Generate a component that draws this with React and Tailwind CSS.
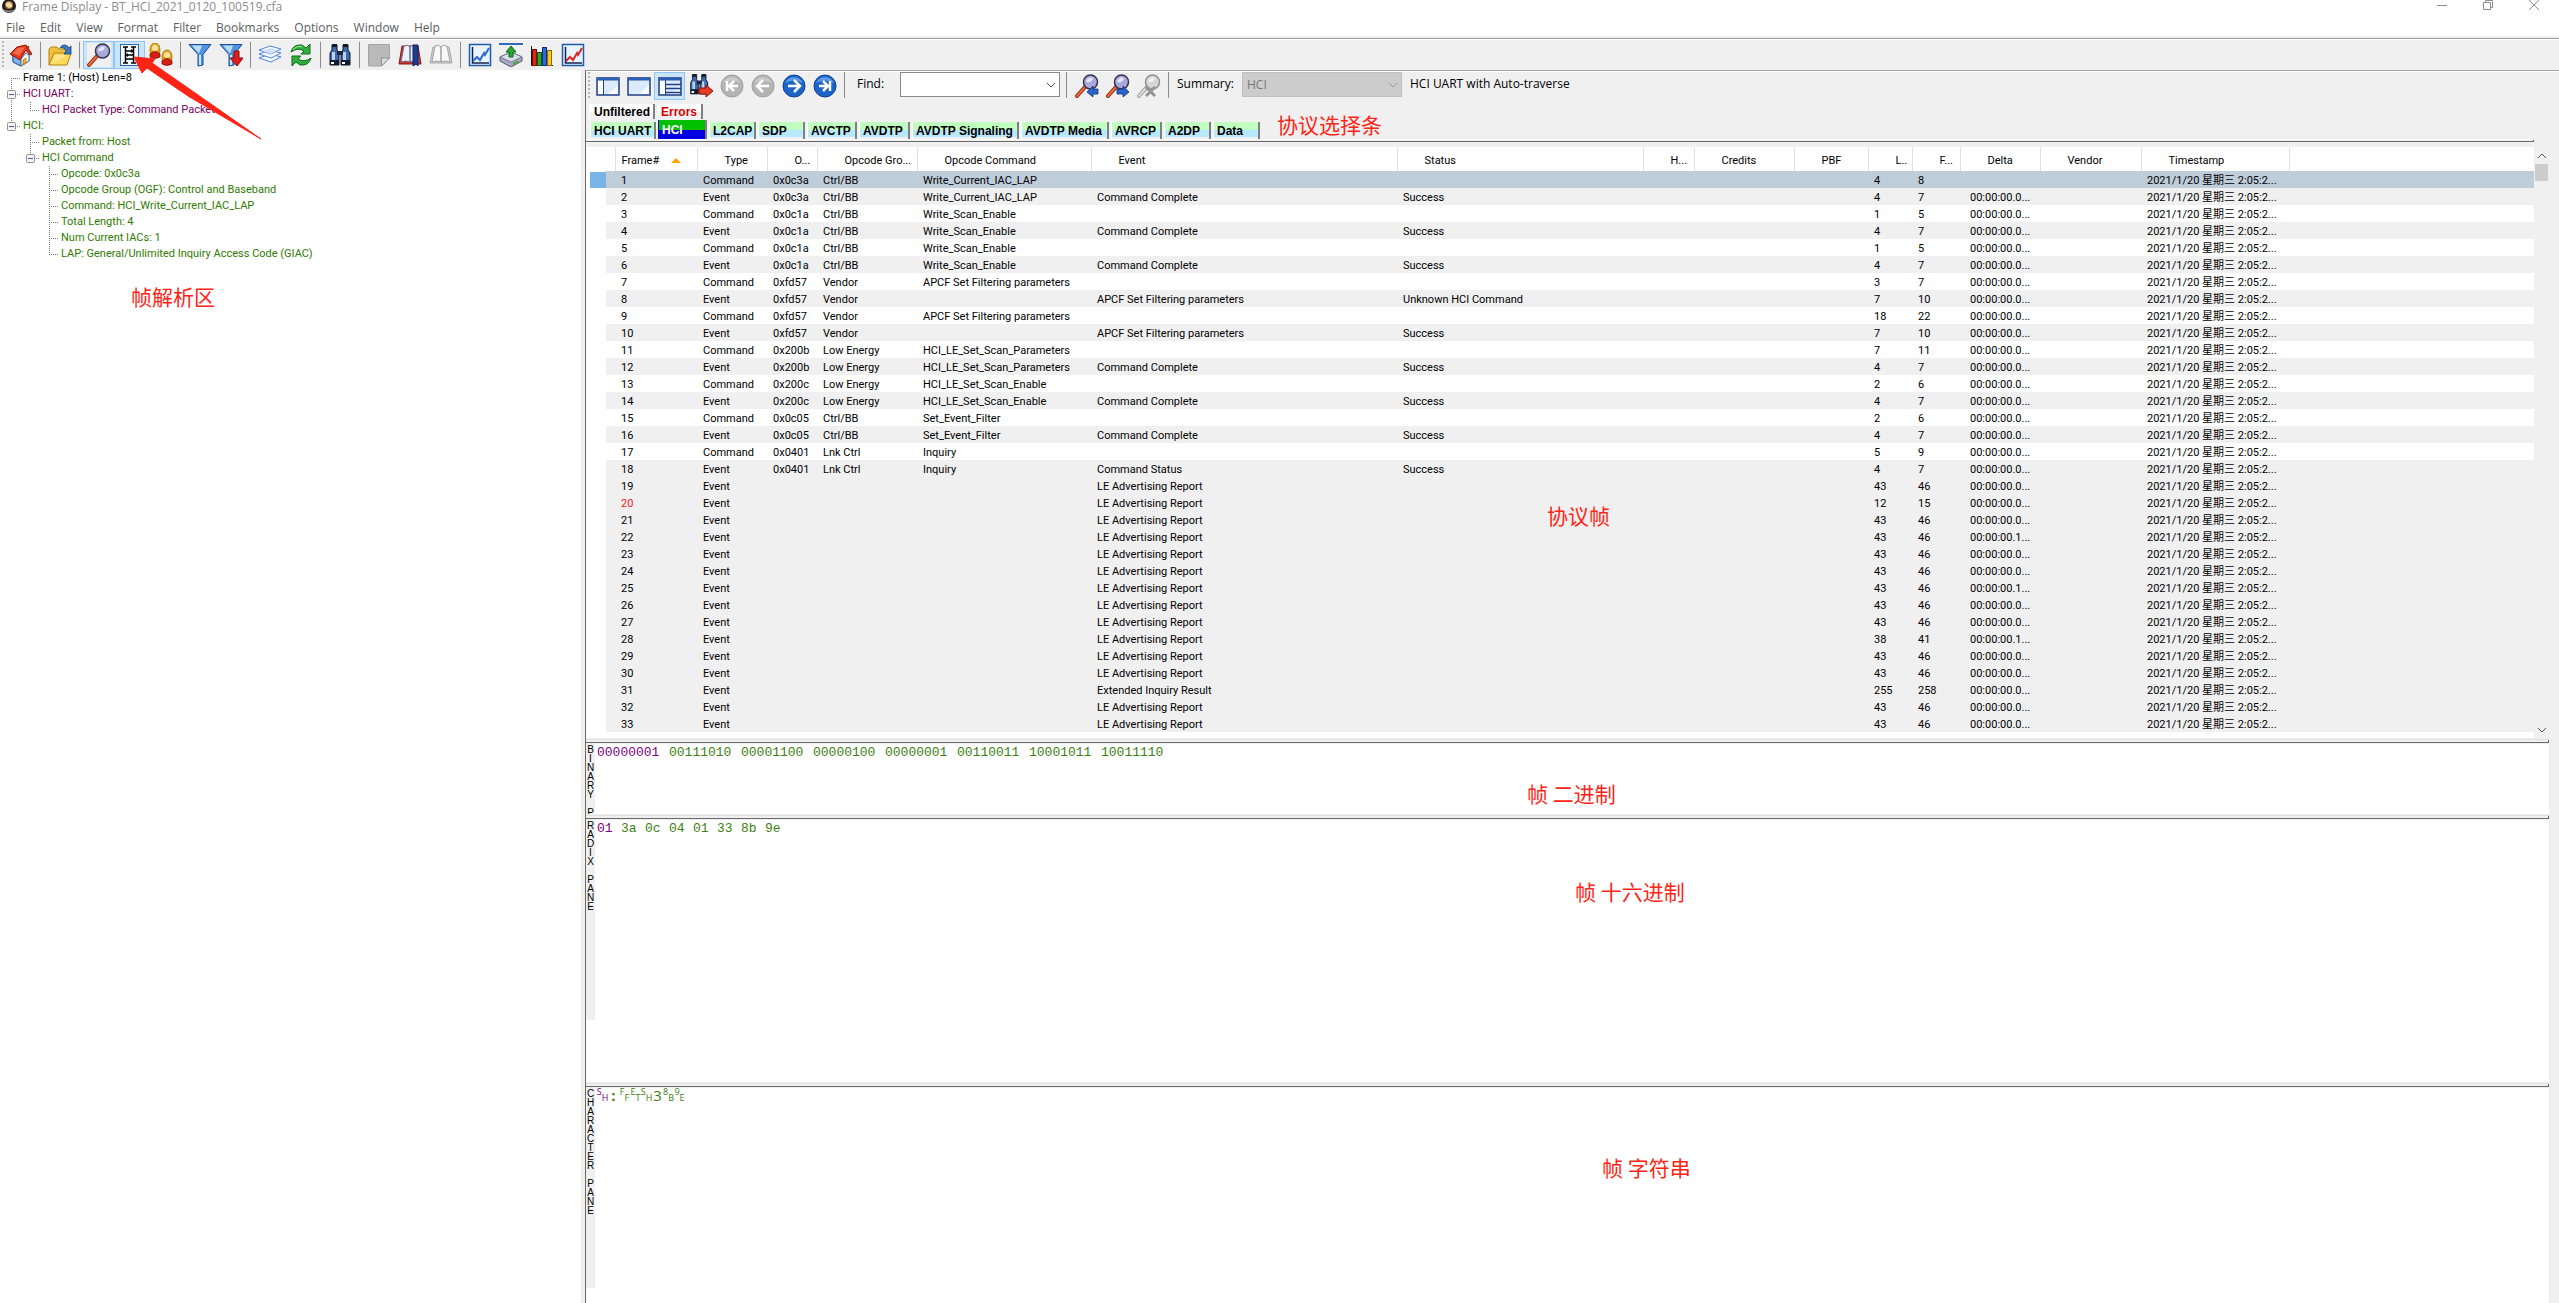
import React from 'react';

const menuItems = ['File', 'Edit', 'View', 'Format', 'Filter', 'Bookmarks', 'Options', 'Window', 'Help'];

/* ---------- Icons ---------- */

const Icon = ({ children }) => (
  <svg viewBox="0 0 24 24" className="w-6 h-6 shrink-0" aria-hidden="true">
    {children}
  </svg>
);

const AppLogo = () => (
  <svg viewBox="0 0 16 16" className="w-4 h-4 shrink-0" aria-hidden="true">
    <circle cx="8" cy="7" r="7" fill="#1d1d1d" />
    <path d="M2 10a7 7 0 0 0 12 0q-6 3-12 0z" fill="#8a8a8a" />
    <circle cx="8" cy="6" r="4" fill="#a8743a" />
    <path d="M5 4l3-1 3 2v3l-3 1-3-2z" fill="#f3d9a6" />
  </svg>
);

const HomeIcon = () => (
  <Icon>
    <path d="M4 11v8l8 4 8-5v-8l-5-4z" fill="#dce9f8" stroke="#3c68a8" />
    <path d="M4 12l8 4v7l-8-4z" fill="#7fb2ea" stroke="#2c5a9c" />
    <path d="M12 16l5-6 3 2v6l-8 5z" fill="#fff" stroke="#4b6ea0" />
    <path d="M14 22v-5l3-2v5z" fill="#f3b43a" stroke="#a56a10" strokeWidth=".8" />
    <path d="M1 11l7-7 9-2 6 9-2 1-4-5-6 10z" fill="#e2371c" stroke="#8e1b0c" />
    <path d="M4 10l5-5 7-1-6 9z" fill="#f56a4a" />
    <path d="M17 3h3v5l-3-4z" fill="#c32812" />
  </Icon>
);

const FolderIcon = () => (
  <Icon>
    <path d="M1 22V6l2-2h6l2 2h7v4" fill="#f0c23c" stroke="#b68412" />
    <path d="M1 22l5-12h17l-4 12z" fill="#fbd95c" stroke="#b68412" />
    <path d="M3 21l4-9h13z" fill="#fff0a2" opacity=".6" />
    <path d="M12 5c2-4 7-4 9 0l2-2v8h-7l2-3c-1-3-4-4-6-3z" fill="#3c78c0" stroke="#173f7c" strokeWidth=".8" />
  </Icon>
);

const Lens = ({ gray }) => (
  <>
    <path d="M2 22l8-9" stroke={gray ? '#9a9a9a' : '#8c2a10'} strokeWidth="4" strokeLinecap="round" />
    <path d="M2 22l8-9" stroke={gray ? '#dcdcdc' : '#f0683c'} strokeWidth="2" strokeLinecap="round" />
    <circle cx="15.500" cy="8" r="7" fill={gray ? '#d6d6d6' : '#a9a9dc'} stroke={gray ? '#8f8f8f' : '#34344c'} strokeWidth="1.500" />
    <path d="M11 8a5 5 0 0 1 7-4q-1 5-7 4z" fill={gray ? '#f2f2f2' : '#e6e6fa'} />
  </>
);

const MagnifierIcon = () => (
  <Icon>
    <rect width="24" height="24" fill="#f0f0f0" />
    <Lens />
  </Icon>
);

const DecodePaneIcon = () => (
  <Icon>
    <rect x="2.500" y="1.500" width="18" height="21" fill="#f4faff" stroke="#2c68b8" />
    <path d="M5 4h5M5 20h5M7.500 4v16M13 4h5M13 20h5M15.500 4v16M8 8h7M8 12h7M8 16h7" stroke="#000" strokeWidth="1.500" />
    <path d="M13 6l3 2-3 2zM10 10l-3 2 3 2z" fill="#000" />
  </Icon>
);

const Person = ({ x, y }) => (
  <g transform={`translate(${x} ${y})`}>
    <path d="M1 8q0-8 5-8t5 8l-1 5H2z" fill="#e4a91c" stroke="#9a6c08" strokeWidth=".8" />
    <circle cx="6" cy="5" r="3" fill="#ffe0a0" />
    <path d="M1 11q5-5 10 0v3q-5 3-10 0z" fill="#d42014" stroke="#8c0e08" strokeWidth=".8" />
  </g>
);

const PeopleIcon = () => (
  <Icon>
    <Person x={0} y={0} />
    <Person x={12} y={7} />
  </Icon>
);

const Funnel = () => (
  <>
    <path d="M1 1.500h22l-8 10V22l-5 1V11.500z" fill="#4f94de" stroke="#1a4f96" />
    <path d="M4 2.500h10l-3 8z" fill="#b9dcfa" />
    <path d="M12 12v10" stroke="#cfe8ff" strokeWidth="2" />
  </>
);

const FunnelIcon = () => (
  <Icon>
    <Funnel />
  </Icon>
);

const FunnelArrowIcon = () => (
  <Icon>
    <Funnel />
    <path d="M15 8h5v7h4l-6 8-7-8h4z" fill="#e01c1c" stroke="#8c0a0a" />
  </Icon>
);

const LayersIcon = () => (
  <Icon>
    {[12, 8, 4].map((y) => (
      <path key={y} d={`M1 ${y + 3}l12 4 10-5-11-3z`} fill="#f4f9ff" stroke="#5384dc" />
    ))}
    <path d="M4 8l9 3 7-4-8-2z" fill="#cfe2fc" />
  </Icon>
);

const RefreshIcon = () => (
  <Icon>
    <path d="M2 9q2-8 11-7l4 3 4-4v10H12l3-3q-6-4-13 1z" fill="#2fae3c" stroke="#126a1c" />
    <path d="M22 15q-2 8-11 7l-4-3-4 4V13h9l-3 3q6 4 13-1z" fill="#2fae3c" stroke="#126a1c" />
    <path d="M4 7q4-5 9-3" stroke="#a6ef9c" fill="none" />
  </Icon>
);

const Binoculars = () => (
  <>
    <path d="M4 2h5v5l2 3v12H2V10l2-3zM15 2h5v5l2 3v12h-9V10l2-3z" fill="#3f69a8" stroke="#0c1830" />
    <path d="M4 9h3v8H4zM15 9h3v8h-3z" fill="#b7d3f2" />
    <path d="M2 17h9v5H2zM13 17h9v5h-9zM4 1h5v3H4zM15 1h5v3h-5z" fill="#111a2c" />
    <path d="M3 19h3v2H3zM14 19h3v2h-3z" fill="#fff" />
    <path d="M9 8h6v4H9z" fill="#1b2740" />
  </>
);

const BinocularsIcon = () => (
  <Icon>
    <Binoculars />
  </Icon>
);

const NoteIcon = () => (
  <Icon>
    <path d="M1.500 1.500h21V15l-8 8h-13z" fill="#b9b9b9" stroke="#a3a3a3" />
    <path d="M22.500 15h-8v8z" fill="#dedede" stroke="#8f8f8f" />
  </Icon>
);

const BookIcon = () => (
  <Icon>
    <path d="M4 3h16l3 18H1z" fill="#c8342c" stroke="#8c1a14" />
    <path d="M6 3q4-2 6 1v15q-4-2-9 0zM18 3q-4-2-6 1v15q4-2 9 0z" fill="#eef0fb" stroke="#6c6c96" />
    <path d="M15 2h5v21l-2-2-3 2z" fill="#1c3f94" stroke="#0c1f5c" />
  </Icon>
);

const OpenBookIcon = () => (
  <Icon>
    <path d="M4 4h16l3 16H1z" fill="#d4d4d4" stroke="#a8a8a8" />
    <path d="M6 3q4-2 6 1v15q-4-2-9 0zM18 3q-4-2-6 1v15q4-2 9 0z" fill="#f8f8f8" stroke="#a2a2a2" />
  </Icon>
);

const ChartIcon = ({ color }) => (
  <Icon>
    <rect x="1.500" y="1.500" width="21" height="21" fill="#eaf4ff" stroke="#1c5cac" strokeWidth="1.500" />
    <path d="M4.500 4v16H21" stroke="#10204c" strokeWidth="1.500" fill="none" />
    <path d="M5 18l4-4 3 3 4-7 1 2 4-7" stroke={color} strokeWidth="2" fill="none" />
  </Icon>
);

const DriveIcon = () => (
  <Icon>
    <path d="M0 1h24" stroke="#2f68bc" strokeWidth="2" />
    <path d="M1 14l11-5 11 5v4l-11 6-11-6z" fill="#a8a8c4" stroke="#56566e" />
    <path d="M1 14l11-5 11 5-11 5z" fill="#dcdcea" stroke="#7c7c94" />
    <path d="M14 20l5-3v2l-5 3z" fill="#35b52c" />
    <path d="M10 14V9H7l5-6 5 6h-3v5z" fill="#27a832" stroke="#0f6a18" />
  </Icon>
);

const BarsIcon = () => (
  <Icon>
    <path d="M1.500 3v19.500H23" stroke="#111" fill="none" />
    <rect x="2.500" y="6.500" width="4" height="16" fill="#e02418" stroke="#7c0c08" />
    <rect x="7.500" y="9.500" width="4" height="13" fill="#27a62e" stroke="#0d5c14" />
    <rect x="12.500" y="4.500" width="4" height="18" fill="#2c6ad4" stroke="#0f2f80" />
    <rect x="17.500" y="7.500" width="4" height="15" fill="#f8c81c" stroke="#8c6c04" />
  </Icon>
);

const WindowIcon = ({ variant }) => (
  <Icon>
    <rect x="1" y="4" width="22" height="17" fill="#dbeafc" stroke="#1f3f86" strokeWidth="1.500" />
    <path d="M12 20l10-9v9z" fill="#f6faff" />
    <path d="M1 5h22" stroke="#2f5fb4" strokeWidth="3" />
    {variant !== 'plain' && <path d="M2 7h5v13H2z" fill="#fff" />}
    {variant !== 'plain' && <path d="M7.500 6v15" stroke="#1f3f86" />}
    {variant === 'split' && (
      <path d="M7 10.500h16M7 14.500h16M7 18.500h16" stroke="#1f3f86" strokeWidth="1.500" />
    )}
  </Icon>
);

const BinocularsArrowIcon = () => (
  <Icon>
    <g transform="translate(0 -1) scale(.85 .95)">
      <Binoculars />
    </g>
    <path d="M10 14h7v-3l7 6-7 6v-3h-7z" fill="#e63a24" stroke="#8e1408" />
  </Icon>
);

const arrowPaths = {
  first: 'M7 7v10M18 12h-8M14 7l-5 5 5 5',
  prev: 'M18 12H7M12 6l-6 6 6 6',
  next: 'M6 12h11M12 6l6 6-6 6',
  last: 'M6 12h8M10 7l5 5-5 5M17 7v10',
};

const NavIcon = ({ kind, gray }) => (
  <Icon>
    <circle cx="12" cy="12" r="11" fill={gray ? '#b4b4b4' : '#1c64c8'} stroke={gray ? '#a0a0a0' : '#0f418e'} />
    <path d="M3 9a10 10 0 0 1 18 0q-9-5-18 0z" fill={gray ? '#cacaca' : '#5e9cea'} />
    <path d={arrowPaths[kind]} stroke="#fff" strokeWidth="2.500" fill="none" />
  </Icon>
);

const FindIcon = ({ kind }) => (
  <Icon>
    <Lens gray={kind === 'clear'} />
    {kind === 'back' && <path d="M23 15v5h-5v3l-6-5 6-6v3z" fill="#2b62cc" stroke="#10327e" strokeWidth=".8" />}
    {kind === 'next' && <path d="M11 15v5h6v3l6-5-6-6v3z" fill="#2b62cc" stroke="#10327e" strokeWidth=".8" />}
    {kind === 'clear' && <path d="M9 13l9 9M18 13l-9 9" stroke="#949494" strokeWidth="3" />}
  </Icon>
);

/* ---------- Toolbar pieces ---------- */

const ToolButton = ({ label, active, children }) => (
  <button
    type="button"
    aria-label={label}
    className={`w-[31px] h-7 flex items-center justify-center shrink-0 border ${
      active ? 'bg-[#cce4f7] border-[#8fc7f5]' : 'border-transparent'
    }`}
  >
    {children}
  </button>
);

const Separator = () => (
  <div className="w-2 flex justify-center shrink-0">
    <div className="w-px h-[26px] bg-[#8c8c8c]" />
  </div>
);

const Grip = () => (
  <div className="w-0.5 h-7 shrink-0 bg-[repeating-linear-gradient(#b8b8b8_0px,#b8b8b8_2px,transparent_2px,transparent_4px)]" />
);

const Chevron = ({ className }) => (
  <svg viewBox="0 0 10 6" className={`w-2.5 h-1.5 ${className}`} fill="none" aria-hidden="true">
    <path d="M1 1l4 4 4-4" stroke="currentColor" />
  </svg>
);

/* ---------- Decode tree ---------- */

const treeRows = [
  { guides: ['start'], text: 'Frame 1: (Host) Len=8', color: 'text-black' },
  { guides: ['boxMid'], text: 'HCI UART:', color: 'text-[#780060]' },
  { guides: ['line', 'end'], text: 'HCI Packet Type: Command Packet', color: 'text-[#780060]' },
  { guides: ['boxEnd'], text: 'HCI:', color: 'text-[#2f7a00]' },
  { guides: ['blank', 'tee'], text: 'Packet from: Host', color: 'text-[#2f7a00]' },
  { guides: ['blank', 'boxEnd'], text: 'HCI Command', color: 'text-[#2f7a00]' },
  { guides: ['blank', 'blank', 'tee'], text: 'Opcode: 0x0c3a', color: 'text-[#2f7a00]' },
  { guides: ['blank', 'blank', 'tee'], text: 'Opcode Group (OGF): Control and Baseband', color: 'text-[#2f7a00]' },
  { guides: ['blank', 'blank', 'tee'], text: 'Command: HCI_Write_Current_IAC_LAP', color: 'text-[#2f7a00]' },
  { guides: ['blank', 'blank', 'tee'], text: 'Total Length: 4', color: 'text-[#2f7a00]' },
  { guides: ['blank', 'blank', 'tee'], text: 'Num Current IACs: 1', color: 'text-[#2f7a00]' },
  { guides: ['blank', 'blank', 'end'], text: 'LAP: General/Unlimited Inquiry Access Code (GIAC)', color: 'text-[#2f7a00]' },
];

const guidePaths = {
  blank: '',
  line: 'M9.500 0v16',
  start: 'M9.500 8v8M9 8.500h9',
  tee: 'M9.500 0v16M9 8.500h9',
  end: 'M9.500 0v8M9 8.500h9',
  boxMid: 'M9.500 0v16M9 8.500h9',
  boxEnd: 'M9.500 0v8M9 8.500h9',
};

const Guide = ({ kind }) => (
  <svg viewBox="0 0 19 16" className="w-[19px] h-4 shrink-0" fill="none" aria-hidden="true">
    <path d={guidePaths[kind]} stroke="#808080" strokeDasharray="1 1" />
    {kind.startsWith('box') && (
      <>
        <rect x="5.500" y="4.500" width="8" height="8" rx="1" fill="#f4f4f4" stroke="#919191" />
        <path d="M7 8.500h5" stroke="#3d5fa8" />
      </>
    )}
  </svg>
);

const DecodeTree = () => (
  <aside className="w-[581px] shrink-0 bg-white pl-0.5">
    <ul className="font-['Roboto',sans-serif] text-[11px] leading-4">
      {treeRows.map((row) => (
        <li key={row.text} className={`flex h-4 whitespace-nowrap ${row.color}`}>
          {row.guides.map((kind, i) => (
            <Guide key={i} kind={kind} />
          ))}
          <span className="pl-0.5">{row.text}</span>
        </li>
      ))}
    </ul>
  </aside>
);

/* ---------- Frame table ---------- */

const protocolTabs = [
  { name: 'HCI UART', width: 'w-[66px]' },
  { name: 'HCI', width: 'w-[49px]', active: true },
  { name: 'L2CAP', width: 'w-[47px]' },
  { name: 'SDP', width: 'w-[47px]' },
  { name: 'AVCTP', width: 'w-[50px]' },
  { name: 'AVDTP', width: 'w-[51px]' },
  { name: 'AVDTP Signaling', width: 'w-[107px]' },
  { name: 'AVDTP Media', width: 'w-[88px]' },
  { name: 'AVRCP', width: 'w-[51px]' },
  { name: 'A2DP', width: 'w-[47px]' },
  { name: 'Data', width: 'w-[47px]' },
];

const columns = [
  { name: 'Type', width: 'w-[70px]' },
  { name: 'O...', width: 'w-[50px]' },
  { name: 'Opcode Gro...', width: 'w-[100px]' },
  { name: 'Opcode Command', width: 'w-[174px]' },
  { name: 'Event', width: 'w-[306px]' },
  { name: 'Status', width: 'w-[246px]' },
  { name: 'H...', width: 'w-[51px]' },
  { name: 'Credits', width: 'w-[100px]' },
  { name: 'PBF', width: 'w-[74px]' },
  { name: 'L..', width: 'w-[44px]' },
  { name: 'F...', width: 'w-[48px]' },
  { name: 'Delta', width: 'w-[80px]' },
  { name: 'Vendor', width: 'w-[101px]' },
  { name: 'Timestamp', width: 'w-[148px]' },
];

const commandFrames = [
  ['Command', '0x0c3a', 'Ctrl/BB', 'Write_Current_IAC_LAP', '', '', 4, 8],
  ['Event', '0x0c3a', 'Ctrl/BB', 'Write_Current_IAC_LAP', 'Command Complete', 'Success', 4, 7],
  ['Command', '0x0c1a', 'Ctrl/BB', 'Write_Scan_Enable', '', '', 1, 5],
  ['Event', '0x0c1a', 'Ctrl/BB', 'Write_Scan_Enable', 'Command Complete', 'Success', 4, 7],
  ['Command', '0x0c1a', 'Ctrl/BB', 'Write_Scan_Enable', '', '', 1, 5],
  ['Event', '0x0c1a', 'Ctrl/BB', 'Write_Scan_Enable', 'Command Complete', 'Success', 4, 7],
  ['Command', '0xfd57', 'Vendor', 'APCF Set Filtering parameters', '', '', 3, 7],
  ['Event', '0xfd57', 'Vendor', '', 'APCF Set Filtering parameters', 'Unknown HCI Command', 7, 10],
  ['Command', '0xfd57', 'Vendor', 'APCF Set Filtering parameters', '', '', 18, 22],
  ['Event', '0xfd57', 'Vendor', '', 'APCF Set Filtering parameters', 'Success', 7, 10],
  ['Command', '0x200b', 'Low Energy', 'HCI_LE_Set_Scan_Parameters', '', '', 7, 11],
  ['Event', '0x200b', 'Low Energy', 'HCI_LE_Set_Scan_Parameters', 'Command Complete', 'Success', 4, 7],
  ['Command', '0x200c', 'Low Energy', 'HCI_LE_Set_Scan_Enable', '', '', 2, 6],
  ['Event', '0x200c', 'Low Energy', 'HCI_LE_Set_Scan_Enable', 'Command Complete', 'Success', 4, 7],
  ['Command', '0x0c05', 'Ctrl/BB', 'Set_Event_Filter', '', '', 2, 6],
  ['Event', '0x0c05', 'Ctrl/BB', 'Set_Event_Filter', 'Command Complete', 'Success', 4, 7],
  ['Command', '0x0401', 'Lnk Ctrl', 'Inquiry', '', '', 5, 9],
  ['Event', '0x0401', 'Lnk Ctrl', 'Inquiry', 'Command Status', 'Success', 4, 7],
];

const report = (length = 43, frameSize = 46, event = 'LE Advertising Report') => [
  'Event', '', '', '', event, '', length, frameSize,
];

const frames = [
  ...commandFrames,
  report(),
  report(12, 15),
  report(),
  report(),
  report(),
  report(),
  report(),
  report(),
  report(),
  report(38, 41),
  report(),
  report(),
  report(255, 258, 'Extended Inquiry Result'),
  report(),
  report(),
];

const slowFrames = [22, 25, 28];
const errorFrames = [20];

const rowBackground = (frame) => {
  if (frame === 1) return 'bg-[#bfccda]';
  return frame % 2 === 0 || frame > 18 ? 'bg-[#f0f0f0]' : 'bg-white';
};

const delta = (frame) => {
  if (frame === 1) return '';
  return slowFrames.includes(frame) ? '00:00:00.1...' : '00:00:00.0...';
};

const Cell = ({ bg, children, className = 'pl-1.5' }) => (
  <td className={`p-0 pt-0.5 overflow-hidden ${bg} ${className}`}>{children}</td>
);

const FrameTable = () => (
  <table className="flex-1 min-w-0 table-fixed border-collapse font-['Roboto','Noto_Sans_CJK_SC',sans-serif] text-[11px] leading-[15px] whitespace-nowrap">
    <colgroup>
      <col className="w-5" />
      <col className="w-[9px]" />
      <col className="w-[82px]" />
      {columns.map((col) => (
        <col key={col.name} className={col.width} />
      ))}
      <col />
    </colgroup>
    <thead>
      <tr className="h-6 text-left">
        <td colSpan={2} className="p-0 border-r border-[#e2e2e2]" />
        <th scope="col" className="p-0 pt-0.5 pl-1.5 font-normal border-r border-[#e2e2e2]">
          <span className="flex items-center gap-3">
            Frame#
            <svg viewBox="0 0 10 5" className="w-2.5 h-[5px]" aria-hidden="true">
              <path d="M0 5l5-5 5 5z" fill="#ffa500" />
            </svg>
          </span>
        </th>
        {columns.map((col) => (
          <th key={col.name} scope="col" className="p-0 pt-0.5 pl-[27px] font-normal border-r border-[#e2e2e2]">
            {col.name}
          </th>
        ))}
        <td className="p-0" />
      </tr>
    </thead>
    <tbody>
      {frames.map(([type, opcode, group, command, event, status, length, size], i) => {
        const frame = i + 1;
        const bg = rowBackground(frame);
        return (
          <tr key={frame} className="h-[17px]">
            <td className="p-0 pl-1">{frame === 1 && <div className="h-4 bg-[#7ab3e6]" />}</td>
            <Cell bg={bg} className="" />
            <Cell bg={bg} className={`pl-1.5 ${errorFrames.includes(frame) ? 'text-[#f02020]' : ''}`}>{frame}</Cell>
            <Cell bg={bg}>{type}</Cell>
            <Cell bg={bg}>{opcode}</Cell>
            <Cell bg={bg}>{group}</Cell>
            <Cell bg={bg}>{command}</Cell>
            <Cell bg={bg}>{event}</Cell>
            <Cell bg={bg}>{status}</Cell>
            <Cell bg={bg} />
            <Cell bg={bg} />
            <Cell bg={bg} />
            <Cell bg={bg}>{length}</Cell>
            <Cell bg={bg}>{size}</Cell>
            <Cell bg={bg} className="pl-2.5">{delta(frame)}</Cell>
            <Cell bg={bg} />
            <Cell bg={bg}>2021/1/20 星期三 2:05:2...</Cell>
            <Cell bg={bg} />
          </tr>
        );
      })}
    </tbody>
  </table>
);

const ScrollBar = () => (
  <div className="w-[15px] shrink-0 flex flex-col items-center justify-between bg-[#f0f0f0] text-[#505050]">
    <div className="w-full flex flex-col items-center">
      <div className="h-[17px] flex items-center">
        <Chevron className="rotate-180" />
      </div>
      <div className="w-[13px] h-[17px] bg-[#cdcdcd]" />
    </div>
    <div className="h-[17px] flex items-center">
      <Chevron className="" />
    </div>
  </div>
);

/* ---------- Data panes ---------- */

const Splitter = () => (
  <div className="h-1.5 shrink-0 pt-px bg-[#f0f0f0]">
    <div className="h-px bg-[#e0e0e0]" />
    <div className="h-[3px] border-b border-r border-[#696969]" />
  </div>
);

const PaneLabel = ({ text, height = 'h-[200px]' }) => (
  <div className={`w-[9px] shrink-0 bg-[#f0f0f0] pt-px font-['Liberation_Sans',sans-serif] text-[10px] leading-[9px] text-center text-black ${height}`}>
    {text.split('').map((letter, i) => (
      <div key={i} className="h-[9px]">{letter}</div>
    ))}
  </div>
);

const binary = ['00000001', '00111010', '00001100', '00000100', '00000001', '00110011', '10001011', '10011110'];
const radix = ['01', '3a', '0c', '04', '01', '33', '8b', '9e'];
const characters = ['SH', ':', 'FF', 'ET', 'SH', '3', '8B', '9E'];

const byteColor = (i) => (i === 0 ? 'text-[#800080]' : 'text-[#3c8010]');

const CharCell = ({ code, index }) => (
  <span className={`w-[11px] h-3.5 flex justify-center ${byteColor(index)}`}>
    {code.length === 1 ? (
      <span className={`text-[15px] leading-3.5 ${code === ':' ? 'font-bold' : ''}`}>{code}</span>
    ) : (
      <>
        <span className="text-[9px] leading-2 self-start">{code[0]}</span>
        <span className="text-[9px] leading-2 self-end">{code[1]}</span>
      </>
    )}
  </span>
);

/* ---------- Annotations ---------- */

const notes = [
  { text: '协议选择条', place: 'left-[1277px] top-[110px]' },
  { text: '帧解析区', place: 'left-[131px] top-[282px]' },
  { text: '协议帧', place: 'left-[1547px] top-[501px]' },
  { text: '帧 二进制', place: 'left-[1527px] top-[779px]' },
  { text: '帧 十六进制', place: 'left-[1575px] top-[877px]' },
  { text: '帧 字符串', place: 'left-[1602px] top-[1153px]' },
];

const Annotations = () => (
  <>
    <svg viewBox="0 0 130 84" className="absolute left-[133px] top-[56px] w-[130px] h-[84px]" aria-hidden="true">
      <path d="M1 1L22 3l-3 4 36 25 73 51-73-43-41-28-5 5z" fill="#ff2415" stroke="#ff2415" strokeLinejoin="round" />
    </svg>
    {notes.map((note) => (
      <span
        key={note.text}
        className={`absolute whitespace-nowrap font-['Noto_Sans_CJK_SC',sans-serif] text-[21px] leading-7 text-[#ff2415] ${note.place}`}
      >
        {note.text}
      </span>
    ))}
  </>
);

/* ---------- Page ---------- */

const TitleBar = () => (
  <header className="bg-white text-xs">
    <div className="flex items-center h-3.5 pl-px text-[#8c8c8c]">
      <AppLogo />
      <h1 className="flex-1 pl-[5px] leading-3.5">Frame Display - BT_HCI_2021_0120_100519.cfa</h1>
      <div className="flex self-start pr-0.5">
        <button type="button" aria-label="Minimize" className="w-[46px] h-2.5 flex items-center justify-center">
          <svg viewBox="0 0 10 10" className="w-2.5 h-2.5" fill="none"><path d="M0 5.500h10" stroke="currentColor" /></svg>
        </button>
        <button type="button" aria-label="Restore" className="w-[46px] h-2.5 flex items-center justify-center">
          <svg viewBox="0 0 10 10" className="w-2.5 h-2.5" fill="none">
            <path d="M.5 2.500h7v7h-7zM2.500 2.500v-2h7v7h-2" stroke="currentColor" />
          </svg>
        </button>
        <button type="button" aria-label="Close" className="w-[46px] h-2.5 flex items-center justify-center">
          <svg viewBox="0 0 10 10" className="w-2.5 h-2.5" fill="none"><path d="M0 0l10 10M10 0L0 10" stroke="currentColor" /></svg>
        </button>
      </div>
    </div>
    <nav className="flex items-end h-[22px] text-[#5c5c5c]">
      {menuItems.map((item) => (
        <button key={item} type="button" className="pl-1.5 pr-[9px] leading-4">{item}</button>
      ))}
    </nav>
  </header>
);

const MainToolbar = () => (
  <div className="mt-0.5 border-t border-[#a0a0a0]">
    <div className="flex items-center h-[31px] pl-0.5 border-t border-white">
      <Grip />
      <div className="w-px" />
      <ToolButton label="Home"><HomeIcon /></ToolButton>
      <Separator />
      <ToolButton label="Open"><FolderIcon /></ToolButton>
      <Separator />
      <ToolButton label="Show decode" active><MagnifierIcon /></ToolButton>
      <ToolButton label="Show panes" active><DecodePaneIcon /></ToolButton>
      <ToolButton label="Participants"><PeopleIcon /></ToolButton>
      <Separator />
      <ToolButton label="Filter"><FunnelIcon /></ToolButton>
      <ToolButton label="Apply filter"><FunnelArrowIcon /></ToolButton>
      <Separator />
      <ToolButton label="Protocol stack"><LayersIcon /></ToolButton>
      <ToolButton label="Reload"><RefreshIcon /></ToolButton>
      <Separator />
      <ToolButton label="Find"><BinocularsIcon /></ToolButton>
      <Separator />
      <ToolButton label="Note"><NoteIcon /></ToolButton>
      <ToolButton label="Bookmark"><BookIcon /></ToolButton>
      <ToolButton label="Bookmarks"><OpenBookIcon /></ToolButton>
      <Separator />
      <ToolButton label="Timeline"><ChartIcon color="#2c68d8" /></ToolButton>
      <ToolButton label="Extract"><DriveIcon /></ToolButton>
      <ToolButton label="Statistics"><BarsIcon /></ToolButton>
      <ToolButton label="Errors"><ChartIcon color="#dc2424" /></ToolButton>
    </div>
  </div>
);

const FrameToolbar = () => (
  <div className="flex items-start h-[33px] pl-0.5 text-xs text-black border-t border-white">
    <Grip />
    <div className="flex pl-0.5">
      <ToolButton label="Left pane"><WindowIcon variant="left" /></ToolButton>
      <ToolButton label="Single pane"><WindowIcon variant="plain" /></ToolButton>
      <ToolButton label="All panes" active><WindowIcon variant="split" /></ToolButton>
      <ToolButton label="Go to"><BinocularsArrowIcon /></ToolButton>
      <ToolButton label="First"><NavIcon kind="first" gray /></ToolButton>
      <ToolButton label="Previous"><NavIcon kind="prev" gray /></ToolButton>
      <ToolButton label="Next"><NavIcon kind="next" /></ToolButton>
      <ToolButton label="Last"><NavIcon kind="last" /></ToolButton>
      <Separator />
    </div>
    <label htmlFor="find" className="w-[52px] pl-[9px] leading-6">Find:</label>
    <div className="relative">
      <select id="find" className="appearance-none block w-40 h-[25px] bg-white border border-[#8a8a8a]" defaultValue="">
        <option value=""></option>
      </select>
      <Chevron className="absolute right-1 top-2.5 text-[#505050]" />
    </div>
    <div className="flex pl-0.5">
      <Separator />
      <div className="flex pl-px">
        <ToolButton label="Find previous"><FindIcon kind="back" /></ToolButton>
        <ToolButton label="Find next"><FindIcon kind="next" /></ToolButton>
        <ToolButton label="Clear find"><FindIcon kind="clear" /></ToolButton>
      </div>
      <Separator />
    </div>
    <label htmlFor="summary" className="w-[70px] pl-[5px] leading-6">Summary:</label>
    <div className="relative">
      <select
        id="summary"
        disabled
        className="appearance-none block w-40 h-[25px] pl-1 bg-[#cccccc] border border-[#bfbfbf] text-[#787878] opacity-100"
      >
        <option>HCI</option>
      </select>
      <Chevron className="absolute right-1 top-2.5 text-[#9a9a9a]" />
    </div>
    <span className="pl-2 leading-6">HCI UART with Auto-traverse</span>
  </div>
);

const ProtocolTabs = () => (
  <div className="mr-[15px] font-['Liberation_Sans',sans-serif] text-xs font-bold text-black">
    <div className="flex gap-0.5 pl-[3px] h-4 items-start">
      <button type="button" className="w-[66px] h-[15px] pl-1 text-left leading-3.5 border-l border-l-white border-r-2 border-r-[#808080] bg-[linear-gradient(#ffffff_8px,#f0f0f0_8px)]">
        Unfiltered
      </button>
      <button type="button" className="w-[46px] h-[15px] pl-[3px] text-left leading-3.5 text-[#d80000] border-l border-l-white border-r-2 border-r-[#808080] bg-[linear-gradient(#ffffff_8px,#f0f0f0_8px)]">
        Errors
      </button>
    </div>
    <div className="flex gap-0.5 pl-1 h-5 items-end border-b border-white whitespace-nowrap">
      {protocolTabs.map((tab) => (
        <button
          key={tab.name}
          type="button"
          className={`pl-[3px] text-left leading-3.5 border-l border-r-2 border-r-[#808080] ${tab.width} ${
            tab.active
              ? 'h-[19px] border-l-[#0000e0] text-white bg-[linear-gradient(#00c000_10px,#0000e0_10px)]'
              : 'h-[17px] border-l-white bg-[linear-gradient(#c0ffc0_8px,#b8e8ff_8px,#b8e8ff_15px,#f0f0f0_15px)]'
          }`}
        >
          {tab.name}
        </button>
      ))}
    </div>
    <div className="h-0.5 border-b border-r border-[#696969]" />
  </div>
);

export default function App() {
  return (
    <div className="relative flex flex-col min-h-screen bg-[#f0f0f0] font-['Open_Sans',sans-serif]">
      <TitleBar />
      <MainToolbar />
      <main className="flex flex-1">
        <DecodeTree />
        <section className="flex flex-col flex-1 min-w-0 ml-1 border-l border-l-[#696969] border-t border-t-[#a0a0a0]">
          <FrameToolbar />
          <div className="flex flex-col flex-1 mr-2.5">
            <ProtocolTabs />
            <div className="flex mt-[5px] text-black">
              <div className="flex flex-1 min-w-0 bg-white pb-1.5">
                <FrameTable />
              </div>
              <ScrollBar />
            </div>
            <Splitter />
            <div className="flex bg-white">
              <PaneLabel text="BINARY P" height="h-[70px]" />
              <div className="flex pl-0.5 pt-px font-['Liberation_Mono',monospace] text-[13px] leading-4">
                {binary.map((bits, i) => (
                  <span key={i} className={`w-[72px] ${byteColor(i)}`}>{bits}</span>
                ))}
              </div>
            </div>
            <Splitter />
            <div className="flex h-[262px] bg-white">
              <PaneLabel text="RADIX PANE" />
              <div className="flex pl-0.5 pt-px font-['Liberation_Mono',monospace] text-[13px] leading-4">
                {radix.map((byte, i) => (
                  <span key={i} className={`w-6 ${byteColor(i)}`}>{byte}</span>
                ))}
              </div>
            </div>
            <Splitter />
            <div className="flex flex-1 bg-white">
              <PaneLabel text="CHARACTER PANE" />
              <div className="flex pl-0.5">
                {characters.map((code, i) => (
                  <CharCell key={i} code={code} index={i} />
                ))}
              </div>
            </div>
          </div>
        </section>
      </main>
      <Annotations />
    </div>
  );
}
